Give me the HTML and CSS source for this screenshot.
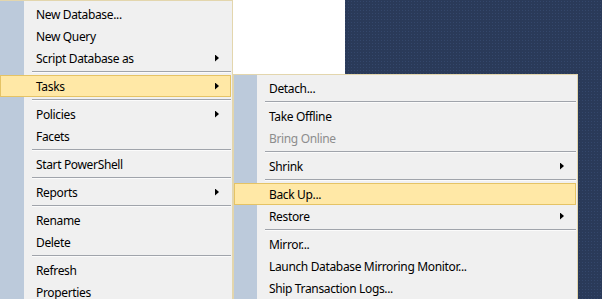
FILE: index.html
```html
<!DOCTYPE html>
<html lang="en">
<head>
<meta charset="utf-8">
<title>Database context menu</title>
<link rel="stylesheet" href="styles.css">
</head>
<body>
<div class="screen">
  <nav class="menu menu-main">
    <div class="item">New Database...</div>
    <div class="item">New Query</div>
    <div class="item has-sub">Script Database as<span class="arrow"></span></div>
    <div class="sep"></div>
    <div class="item has-sub active">Tasks<span class="arrow"></span></div>
    <div class="sep"></div>
    <div class="item has-sub">Policies<span class="arrow"></span></div>
    <div class="item">Facets</div>
    <div class="sep"></div>
    <div class="item">Start PowerShell</div>
    <div class="sep"></div>
    <div class="item has-sub">Reports<span class="arrow"></span></div>
    <div class="sep"></div>
    <div class="item">Rename</div>
    <div class="item">Delete</div>
    <div class="sep"></div>
    <div class="item">Refresh</div>
    <div class="item">Properties</div>
  </nav>
  <div class="workspace">
    <div class="doc-panel"></div>
  </div>
  <nav class="menu menu-sub">
    <div class="item">Detach...</div>
    <div class="sep"></div>
    <div class="item">Take Offline</div>
    <div class="item disabled">Bring Online</div>
    <div class="sep"></div>
    <div class="item has-sub">Shrink<span class="arrow"></span></div>
    <div class="sep"></div>
    <div class="item active">Back Up...</div>
    <div class="item has-sub">Restore<span class="arrow"></span></div>
    <div class="sep"></div>
    <div class="item">Mirror...</div>
    <div class="item">Launch Database Mirroring Monitor...</div>
    <div class="item">Ship Transaction Logs...</div>
  </nav>
</div>
</body>
</html>
```
FILE: styles.css
```css
html, body {
  margin: 0;
  padding: 0;
  background: #2a3a59;
}

.screen {
  position: relative;
  display: flex;
  width: 602px;
  height: 299px;
  overflow: hidden;
  font-family: "Noto Sans", "Open Sans", sans-serif;
  font-size: 12px;
  letter-spacing: -0.35px;
  color: #000;
}

.menu {
  box-sizing: border-box;
  padding: 2px 1px 2px 0;
  border-top: 1px solid #e3d6ad;
  border-right: 1px solid #e3d6ad;
}

.menu-main {
  flex: none;
  width: 233px;
  background: linear-gradient(to right, #bccadb 24px, #f0f0f0 24px);
}

.workspace {
  flex: 1;
  background-color: #2a3a59;
  background-image: radial-gradient(circle, #34476b 0.7px, transparent 1px);
  background-size: 3px 3px;
}

.doc-panel {
  width: 112px;
  height: 74px;
  background: #ffffff;
}

.menu-sub {
  position: absolute;
  left: 233px;
  top: 74px;
  width: 345px;
  border-left: 1px solid #e3d6ad;
  background: linear-gradient(to right, #bccadb 23px, #f0f0f0 23px);
}

.item {
  box-sizing: border-box;
  display: flex;
  align-items: center;
  height: 22px;
  padding-left: 35px;
  padding-right: 11px;
  border: 1px solid transparent;
  white-space: nowrap;
}

.menu-sub .item {
  padding-left: 34px;
  padding-right: 11px;
}

.item.active {
  background: #ffe8a6;
  border-color: #e5c365;
}

.item.disabled {
  color: #8d8d8d;
}

.arrow {
  margin-left: auto;
  width: 4px;
  height: 7px;
  background: #000;
  clip-path: polygon(0 0, 100% 50%, 0 100%);
}

.sep {
  height: 6px;
  box-sizing: border-box;
  padding-top: 2px;
  margin-left: 32px;
}

.menu-sub .sep {
  margin-left: 31px;
}

.sep::before {
  content: "";
  display: block;
  height: 1px;
  background: #a0a4ab;
  border-bottom: 1px solid #fbfbfb;
}
```
